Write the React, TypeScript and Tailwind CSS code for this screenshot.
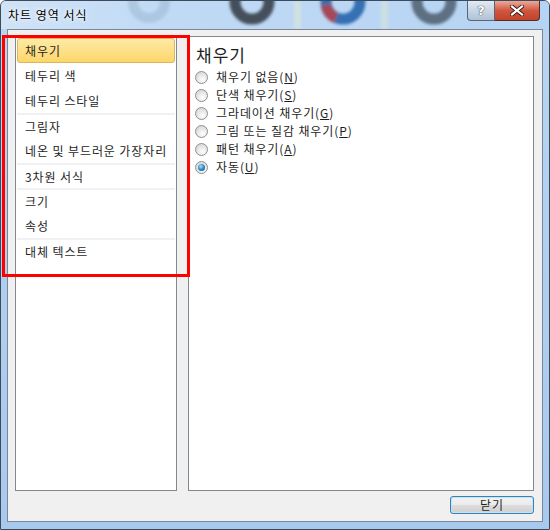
import React from "react";

// --- Data ---
type NavItem = { label: string; groupStart?: boolean };

const navItems: NavItem[] = [
  { label: "채우기" },
  { label: "테두리 색" },
  { label: "테두리 스타일" },
  { label: "그림자", groupStart: true },
  { label: "네온 및 부드러운 가장자리" },
  { label: "3차원 서식", groupStart: true },
  { label: "크기", groupStart: true },
  { label: "속성" },
  { label: "대체 텍스트", groupStart: true },
];

type FillOption = { before: string; key: string; checked?: boolean };

const fillOptions: FillOption[] = [
  { before: "채우기 없음", key: "N" },
  { before: "단색 채우기", key: "S" },
  { before: "그라데이션 채우기", key: "G" },
  { before: "그림 또는 질감 채우기", key: "P" },
  { before: "패턴 채우기", key: "A" },
  { before: "자동", key: "U", checked: true },
];

const font = "font-['Noto_Sans_CJK_KR','Malgun_Gothic',sans-serif]";

// --- Title bar glass (blurred chart behind the window) ---
function GlassBackdrop() {
  return (
    <svg className="absolute inset-0" width="550" height="28" viewBox="0 0 550 28">
      <defs>
        <filter id="blur" x="-20%" y="-50%" width="140%" height="200%">
          <feGaussianBlur stdDeviation="1.8" />
        </filter>
        <linearGradient id="glass" x1="0" y1="0" x2="1" y2="0">
          <stop offset="0" stopColor="#d0e3f7" />
          <stop offset="0.3" stopColor="#c0daf5" />
          <stop offset="1" stopColor="#b5d3f3" />
        </linearGradient>
      </defs>
      <rect width="550" height="28" fill="url(#glass)" />
      <g filter="url(#blur)">
        <rect x="293" y="0" width="7" height="28" fill="#d4e4dc" opacity="0.8" />
        <rect x="380" y="0" width="7" height="28" fill="#d4e4dc" opacity="0.7" />
        <circle cx="148" cy="1" r="16" fill="none" stroke="#8fa8c2" strokeWidth="10" opacity="0.4" />
        <circle cx="251" cy="1" r="17" fill="none" stroke="#444f5b" strokeWidth="11" />
        <circle cx="342" cy="1" r="17" fill="none" stroke="#366fb3" strokeWidth="11" />
        <path d="M 325 4 A 17 17 0 0 0 335 17" fill="none" stroke="#a4495a" strokeWidth="11" />
        <circle cx="433" cy="1" r="17" fill="none" stroke="#5d6f82" strokeWidth="11" />
      </g>
    </svg>
  );
}

function CaptionButtons() {
  return (
    <div className="absolute top-0 right-[9px] flex">
      <div className="w-[28px] h-[20px] border border-[#56657a] border-t-0 rounded-bl-[4px] bg-gradient-to-b from-[#e3ebf3] via-[#c8d5e3] to-[#b1c2d6] flex items-center justify-center">
        <span className="text-[13px] leading-none font-bold text-white font-['DejaVu_Sans',sans-serif] [text-shadow:0_0_1px_#2c3a4c,0_0_1px_#2c3a4c]">
          ?
        </span>
      </div>
      <div className="w-[45px] h-[20px] border border-[#5a2a22] border-t-0 border-l-0 rounded-br-[4px] bg-gradient-to-b from-[#e9a99a] via-[#d2553f] to-[#c0432a] flex items-center justify-center">
        <svg width="14" height="11" viewBox="0 0 14 11">
          <path d="M2 1.5 L12 9.5 M12 1.5 L2 9.5" stroke="#3a1a14" strokeWidth="4" strokeLinecap="square" />
          <path d="M2 1.5 L12 9.5 M12 1.5 L2 9.5" stroke="#ffffff" strokeWidth="2.2" strokeLinecap="square" />
        </svg>
      </div>
    </div>
  );
}

function Radio({ checked }: { checked?: boolean }) {
  return (
    <span className="w-[13px] h-[13px] rounded-full border border-[#8e8f8f] bg-[radial-gradient(circle_at_60%_70%,#ffffff,#dcdcdc_70%)] flex items-center justify-center shrink-0">
      {checked && (
        <span className="w-[7px] h-[7px] rounded-full bg-[radial-gradient(circle_at_40%_35%,#a6e0ff,#2b7fc4_55%,#14456f)]" />
      )}
    </span>
  );
}

// --- Component ---
export default function App() {
  return (
    <div className={`${font} w-[550px] h-[530px] relative flex flex-col border border-[#3d4a5a] rounded-t-[6px] bg-gradient-to-b from-[#b9d5f2] to-[#a8c9ee] px-[6px] pb-[7px] overflow-hidden`}>
      {/* Title bar */}
      <div className="relative h-[28px] -mx-[6px] shrink-0">
        <GlassBackdrop />
        <span className="absolute left-[7px] top-[6px] text-[12px] leading-[16px] tracking-[1px] text-black [text-shadow:0_0_6px_#ffffff,0_0_3px_#ffffff]">
          차트 영역 서식
        </span>
        <CaptionButtons />
      </div>

      {/* Dialog body */}
      <div className="flex-1 flex flex-col bg-[#f0f0f0] border border-[#7b8797] pt-[6px] pl-[7px] pr-[8px]">
        <div className="flex gap-[11px] h-[455px]">
          {/* Category list */}
          <div className="w-[162px] bg-white border border-[#828790] p-[1px] tracking-[0.9px]">
            {navItems.map((item, i) =>
              i === 0 ? (
                <div
                  key={item.label}
                  className="h-[25px] rounded-[3px] border border-[#d8b75f] bg-gradient-to-b from-[#fdeaa4] to-[#fcd66a] flex items-center pl-[7px] text-[12px] text-[#1e1e1e]"
                >
                  {item.label}
                </div>
              ) : (
                <div
                  key={item.label}
                  className={`h-[25px] flex items-center pl-[8px] text-[12px] text-[#1e1e1e] ${item.groupStart ? "border-t-2 border-[#f0f0f5]" : ""}`}
                >
                  {item.label}
                </div>
              ),
            )}
          </div>

          {/* Fill page */}
          <div className="flex-1 bg-white border border-[#828790] pl-[6px] pt-[7px]">
            <div className="text-[17px] leading-[22px] tracking-[1px] text-[#1e1e1e] pl-[1px]">채우기</div>
            <div className="mt-[2px] flex flex-col">
              {fillOptions.map((opt) => (
                <label key={opt.key} className="h-[18px] flex items-center gap-[8px] text-[12px] tracking-[0.9px] text-[#1e1e1e]">
                  <Radio checked={opt.checked} />
                  <span>
                    {opt.before}(<u className="underline-offset-1">{opt.key}</u>)
                  </span>
                </label>
              ))}
            </div>
          </div>
        </div>

        <div className="flex justify-end mt-[5px]">
          <button className="w-[84px] h-[18px] rounded-[3px] border border-[#3c7fb1] shadow-[inset_0_0_0_1px_#bfe6fb] bg-[linear-gradient(#f2f2f2_0%,#ebebeb_50%,#dddddd_50%,#cfcfcf_100%)] text-[12px] leading-none tracking-[1px] text-[#1e1e1e] flex items-center justify-center">
            닫기
          </button>
        </div>
      </div>

      {/* Annotation box drawn over the dialog */}
      <div className="absolute left-[1px] top-[34px] w-[188px] h-[242px] border-[3px] border-[#ff0000] pointer-events-none" />
    </div>
  );
}
